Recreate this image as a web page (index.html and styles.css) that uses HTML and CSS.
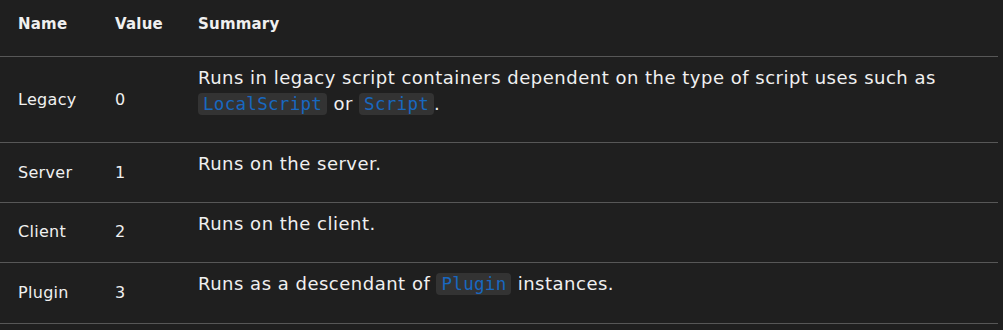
FILE: index.html
```html
<!DOCTYPE html>
<html>
<head>
<meta charset="utf-8">
<link rel="stylesheet" href="styles.css">
</head>
<body>
<table class="enum-table">
  <thead>
    <tr>
      <th class="col-name">Name</th>
      <th class="col-value">Value</th>
      <th class="col-summary">Summary</th>
    </tr>
  </thead>
  <tbody>
    <tr>
      <td class="cell-name">Legacy</td>
      <td class="cell-value">0</td>
      <td class="cell-summary">Runs in legacy script containers dependent on the type of script uses such as <code class="code">LocalScript</code> or <code class="code">Script</code>.</td>
    </tr>
    <tr>
      <td class="cell-name">Server</td>
      <td class="cell-value">1</td>
      <td class="cell-summary">Runs on the server.</td>
    </tr>
    <tr>
      <td class="cell-name">Client</td>
      <td class="cell-value">2</td>
      <td class="cell-summary">Runs on the client.</td>
    </tr>
    <tr>
      <td class="cell-name">Plugin</td>
      <td class="cell-value">3</td>
      <td class="cell-summary">Runs as a descendant of <code class="code">Plugin</code> instances.</td>
    </tr>
  </tbody>
</table>
</body>
</html>
```
FILE: styles.css
```css
html, body {
  margin: 0;
  padding: 0;
  background: #1f1f1f;
}

body {
  color: #f0f0f0;
  font-family: "DejaVu Sans", sans-serif;
}

.enum-table {
  width: 998px;
  border-collapse: collapse;
  table-layout: fixed;
}

.enum-table th {
  text-align: left;
  font-weight: bold;
  font-size: 15px;
  letter-spacing: 0.2px;
  line-height: 24px;
  padding: 12px 0 20px 18px;
  border-bottom: 1px solid #575757;
  vertical-align: top;
}

.col-name { width: 79px; }
.col-value { width: 65px; }

.enum-table td {
  border-bottom: 1px solid #575757;
}

.cell-name,
.cell-value {
  font-size: 16px;
  letter-spacing: 0.3px;
  line-height: 24px;
  padding: 0 0 0 18px;
  vertical-align: middle;
}

.cell-summary {
  font-size: 18px;
  letter-spacing: 0.5px;
  line-height: 25.7px;
  padding: 8px 40px 25px 18px;
  vertical-align: top;
}

.code {
  font-family: "DejaVu Sans Mono", monospace;
  font-size: 17.5px;
  letter-spacing: 0.3px;
  color: #1868c0;
  background: #333333;
  border-radius: 4px;
  padding: 1px 5px;
}
```
